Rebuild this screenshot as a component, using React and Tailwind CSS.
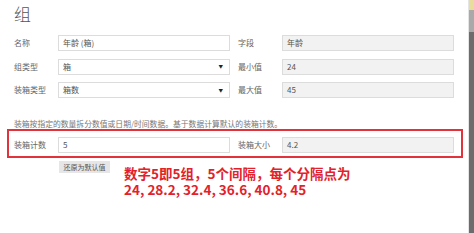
import React from 'react';

const font = { fontFamily: '"Noto Sans CJK SC", "Noto Sans", sans-serif' };

function Field({ label, value, readOnly, select }) {
  return (
    <div className="flex items-center h-[16px]">
      <span className="w-[44px] shrink-0 text-[8px] text-[#666] leading-none">{label}</span>
      <div
        className={`flex-1 h-[16px] flex items-center justify-between px-[4px] border border-[#dcdcdc] text-[8px] text-[#555] leading-none ${
          readOnly ? 'bg-[#f2f2f2]' : 'bg-white'
        }`}
      >
        <span>{value}</span>
        {select && <span className="text-[4.5px] text-[#222] mr-[2px]">▼</span>}
      </div>
    </div>
  );
}

export default function App() {
  return (
    <div className="flex w-[474px] h-[233px] bg-white overflow-hidden" style={font}>
      <div className="flex-1 pl-[14px] pt-[4px]">
        <h1 className="text-[17px] font-light text-[#555] leading-[20px]">组</h1>

        <div className="mt-[11px] w-[440px] grid grid-cols-2 gap-x-[8px] gap-y-[7.5px]">
          <Field label="名称" value="年龄 (箱)" />
          <Field label="字段" value="年龄" readOnly />
          <Field label="组类型" value="箱" select />
          <Field label="最小值" value="24" readOnly />
          <Field label="装箱类型" value="箱数" select />
          <Field label="最大值" value="45" readOnly />
        </div>

        <p className="mt-[21px] text-[7.8px] text-[#777] leading-[10px]">
          装箱按指定的数量拆分数值或日期/时间数据。基于数据计算默认的装箱计数。
        </p>

        {/* annotation box */}
        <div className="-ml-[7px] w-[456px] h-[29px] border-2 border-[#e0333b] pl-[5px] pt-[6px]">
          <div className="w-[440px] grid grid-cols-2 gap-x-[8px]">
            <Field label="装箱计数" value="5" />
            <Field label="装箱大小" value="4.2" readOnly />
          </div>
        </div>

        <div className="flex items-start mt-[3px]">
          <button className="ml-[45px] h-[12px] w-[51px] bg-[#e6e6e6] text-[7px] text-[#555] leading-none">
            还原为默认值
          </button>
          <p className="ml-[14px] mt-[4px] text-[13.5px] font-bold text-[#e2222b] leading-[16px] whitespace-nowrap">
            数字5即5组，5个间隔，每个分隔点为
            <br />
            24, 28.2, 32.4, 36.6, 40.8, 45
          </p>
        </div>
      </div>

      {/* window edge / scrollbar */}
      <div className="w-[6px] flex flex-col border-l border-[#e4e4e4]">
        <div className="h-[10px] bg-[#e9dd9c]" />
        <div className="h-[22px] bg-[#a9a9a9]" />
        <div className="flex-1 bg-[#6c6c6c]" />
      </div>
    </div>
  );
}
